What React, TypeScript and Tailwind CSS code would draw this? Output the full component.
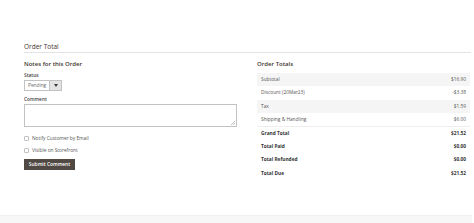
import React from "react";

const rows = [
  { label: "Subtotal", value: "$16.90", gray: true },
  { label: "Discount (20Mar23)", value: "-$3.38", gray: false },
  { label: "Tax", value: "$1.59", gray: true },
  { label: "Shipping & Handling", value: "$6.00", gray: false },
];

const totals = [
  { label: "Grand Total", value: "$21.52" },
  { label: "Total Paid", value: "$0.00" },
  { label: "Total Refunded", value: "$0.00" },
  { label: "Total Due", value: "$21.52" },
];

export default function App() {
  return (
    <div
      className="w-[474px] h-[223px] bg-white flex flex-col overflow-hidden text-[#303030]"
      style={{ fontFamily: '"Open Sans", "Liberation Sans", sans-serif' }}
    >
      <div className="pl-[24px] w-[471px] pt-[42px]">
        <div className="h-[11px] border-b border-[#e3e3e3] text-[6.5px] leading-[10px] text-[#41362f]">
          Order Total
        </div>
        <div className="flex gap-[20px] mt-[7px]">
          {/* Left column */}
          <div className="w-[213px] flex flex-col">
            <div className="text-[6px] leading-[8px] font-semibold text-[#41362f]">Notes for this Order</div>
            <div className="mt-[4px] text-[4.8px] leading-[6px] font-semibold text-[#444]">Status</div>
            <div className="mt-[2px] flex h-[11px] w-[38px] border border-[#c2c2c2] box-border">
              <div className="flex-1 flex items-center pl-[3px] text-[4.8px] text-[#666]">Pending</div>
              <div className="w-[12px] bg-[#e3e3e3] border-l border-[#c2c2c2] flex items-center justify-center">
                <svg width="4" height="3" viewBox="0 0 4 3">
                  <path d="M0 0 L4 0 L2 3 Z" fill="#41362f" />
                </svg>
              </div>
            </div>
            <div className="mt-[5px] text-[4.8px] leading-[6px] font-semibold text-[#444]">Comment</div>
            <div className="mt-[2px] h-[23px] w-[213px] border border-[#c2c2c2] box-border relative">
              <svg className="absolute right-[1px] bottom-[1px]" width="4" height="4" viewBox="0 0 4 4">
                <path d="M4 0 L0 4 M4 2 L2 4" stroke="#999" strokeWidth="0.6" />
              </svg>
            </div>
            <div className="mt-[8px] flex items-center h-[6px] gap-[3px]">
              <div className="w-[5px] h-[5px] border border-[#c2c2c2] rounded-[1px] box-border bg-white" />
              <span className="text-[4.8px] leading-[6px] text-[#555]">Notify Customer by Email</span>
            </div>
            <div className="mt-[6px] flex items-center h-[6px] gap-[3px]">
              <div className="w-[5px] h-[5px] border border-[#c2c2c2] rounded-[1px] box-border bg-white" />
              <span className="text-[4.8px] leading-[6px] text-[#555]">Visible on Storefront</span>
            </div>
            <div className="mt-[6px] h-[11px] w-[51px] bg-[#514943] text-white text-[4.9px] font-semibold flex items-center justify-center">
              Submit Comment
            </div>
          </div>
          {/* Right column */}
          <div className="w-[213px] flex flex-col">
            <div className="text-[6px] leading-[8px] font-semibold text-[#41362f]">Order Totals</div>
            <div className="mt-[5px] flex flex-col">
              {rows.map((r, i) => (
                <div
                  key={r.label}
                  className={`flex items-center justify-between px-[4px] text-[4.8px] text-[#555] ${
                    r.gray ? "bg-[#f5f5f5]" : "bg-white"
                  } ${i === 1 ? "h-[14px]" : "h-[13px]"} ${i === 3 ? "border-b border-[#eeeeee] h-[14px]" : ""}`}
                >
                  <span>{r.label}</span>
                  <span>{r.value}</span>
                </div>
              ))}
              {totals.map((r, i) => (
                <div
                  key={r.label}
                  className={`flex items-center justify-between px-[4px] text-[4.8px] font-bold text-[#333] ${
                    i === 2 ? "h-[14px]" : "h-[13px]"
                  }`}
                >
                  <span>{r.label}</span>
                  <span>{r.value}</span>
                </div>
              ))}
            </div>
          </div>
        </div>
      </div>
      <div className="mt-auto h-[8px] w-[472px] bg-[#f7f7f7] border-t border-[#efefef]" />
    </div>
  );
}
